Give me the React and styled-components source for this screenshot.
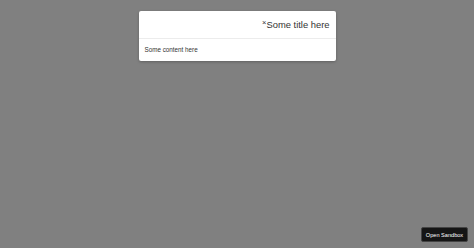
import React from 'react';
import styled, { createGlobalStyle } from 'styled-components';

const GlobalStyle = createGlobalStyle`
  html, body {
    margin: 0;
    padding: 0;
    height: 100%;
    background: #808080;
    font-family: 'Liberation Sans', Arial, sans-serif;
  }
  #root {
    height: 100%;
  }
`;

const Backdrop = styled.div`
  min-height: 100%;
  padding-top: 11px;
  box-sizing: border-box;
`;

const Modal = styled.div`
  width: 197px;
  margin: 0 auto;
  background: #fff;
  border-radius: 2px;
  box-shadow: 0 1px 3px rgba(0, 0, 0, 0.25);
`;

const Header = styled.div`
  display: flex;
  justify-content: flex-end;
  align-items: center;
  height: 26px;
  padding: 0 6px 1px;
  border-bottom: 1px solid #ececec;
`;

const Close = styled.button`
  border: 0;
  background: none;
  padding: 0;
  margin: -3px 0 0 0;
  font-family: inherit;
  font-size: 7.5px;
  line-height: 1;
  color: #333;
  cursor: pointer;
`;

const Title = styled.h4`
  margin: 0;
  font-size: 9.4px;
  font-weight: 400;
  color: #333;
`;

const Body = styled.div`
  display: flex;
  align-items: center;
  height: 21px;
  padding: 0 6px 1px;
  font-size: 6.3px;
  color: #333;
`;

const SandboxButton = styled.a`
  position: fixed;
  right: 6px;
  bottom: 6px;
  display: flex;
  align-items: center;
  justify-content: center;
  width: 47px;
  height: 15px;
  background: #151515;
  border: 1px solid #444;
  box-sizing: border-box;
  border-radius: 2px;
  color: #fff;
  font-size: 5.6px;
  text-decoration: none;
`;

function App() {
  return (
    <>
      <GlobalStyle />
      <Backdrop>
        <Modal>
          <Header>
            <Close>×</Close>
            <Title>Some title here</Title>
          </Header>
          <Body>Some content here</Body>
        </Modal>
      </Backdrop>
      <SandboxButton href="#">Open Sandbox</SandboxButton>
    </>
  );
}

export default App;
